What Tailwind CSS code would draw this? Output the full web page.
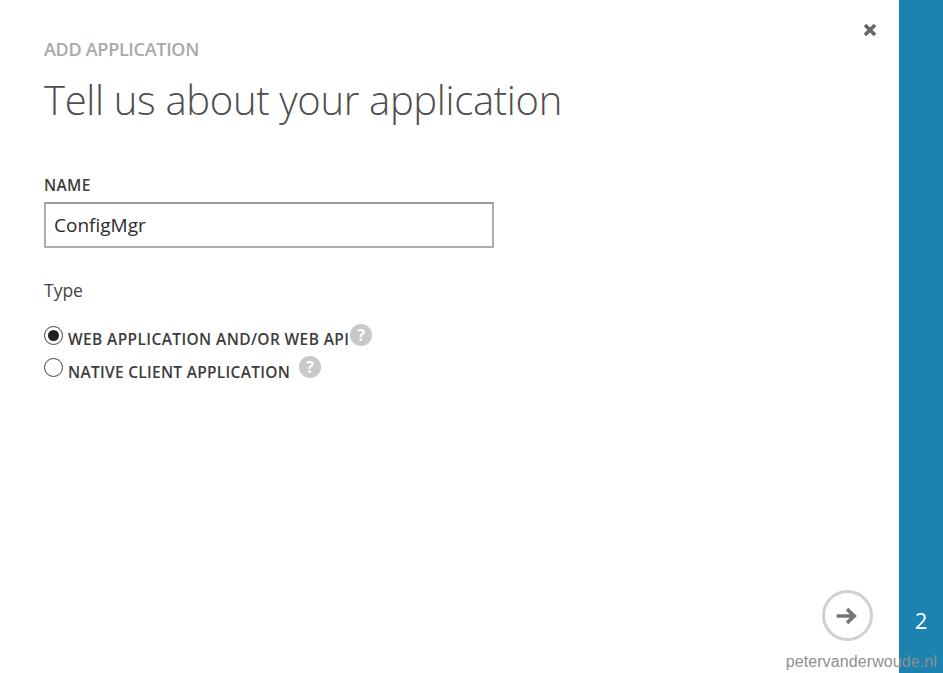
<!DOCTYPE html>
<html lang="en">
<head>
    <meta charset="UTF-8">
    <title>Add Application</title>
    <script src="https://cdn.jsdelivr.net/npm/@tailwindcss/browser@4"></script>
</head>
<body class="bg-white font-['Open_Sans',sans-serif] overflow-hidden">
    <div class="relative flex w-[943px] h-[673px] overflow-hidden">
        <!-- Dialog body -->
        <div class="relative w-[899px] h-full pl-[44px] pt-[39px]">
            <button class="absolute left-[862px] top-[22px] w-4 h-4">
                <svg viewBox="0 0 16 16" class="w-4 h-4"><path d="M3 3L13 13M13 3L3 13" stroke="#666" stroke-width="3.6" stroke-linecap="butt"/></svg>
            </button>

            <div class="text-[18px] leading-[21px] font-semibold text-[#a9a9a9] tracking-[-0.3px]">ADD APPLICATION</div>
            <h1 class="mt-[12px] text-[40px] leading-[56px] font-light text-[#4e4e4e] tracking-[-0.33px]">Tell us about your application</h1>

            <label class="block mt-[47px] text-[15.5px] leading-[20px] font-semibold text-[#3c3c3c] tracking-[0.35px]">NAME</label>
            <input value="ConfigMgr" class="block mt-[7px] w-[450px] h-[46px] border-2 border-[#adadad] border-t-[#9a9a9a] px-[8px] text-[19px] text-[#2c2c2c] bg-white outline-none">

            <div class="mt-[31px] text-[17.5px] leading-[22px] text-[#444]">Type</div>

            <div class="mt-[23px] flex flex-col gap-[9px]">
                <div class="flex items-start h-[24px]">
                    <span class="flex items-center justify-center w-[19px] h-[19px] mt-[2px] rounded-full border border-[#444] bg-white">
                        <span class="w-[11px] h-[11px] rounded-full bg-[#222]"></span>
                    </span>
                    <span class="ml-[5px] mt-[5px] text-[15.5px] leading-[20px] font-semibold text-[#3c3c3c] tracking-[0.38px]">WEB APPLICATION AND/OR WEB API</span>
                    <span class="flex items-center justify-center w-[22px] h-[22px] ml-[1px] rounded-full bg-[#c9c9c9] text-white text-[16px] font-bold leading-none">?</span>
                </div>
                <div class="flex items-start h-[24px]">
                    <span class="w-[19px] h-[19px] mt-[1px] rounded-full border border-[#444] bg-white"></span>
                    <span class="ml-[5px] mt-[5px] text-[15.5px] leading-[20px] font-semibold text-[#3c3c3c] tracking-[0.28px]">NATIVE CLIENT APPLICATION</span>
                    <span class="flex items-center justify-center w-[22px] h-[22px] ml-[9px] -mt-[1px] rounded-full bg-[#c9c9c9] text-white text-[16px] font-bold leading-none">?</span>
                </div>
            </div>

            <!-- Next button -->
            <button class="absolute left-[822px] top-[590px] flex items-center justify-center w-[51px] h-[51px] rounded-full border-[3px] border-[#d0d0d0] bg-white">
                <svg viewBox="0 0 26 22" class="w-[24px] h-[20px] -ml-[2px]"><path d="M1.5 11H21M13 3.5L21 11L13 18.5" fill="none" stroke="#777" stroke-width="4"/></svg>
            </button>
        </div>

        <!-- Step rail -->
        <div class="w-[44px] h-full bg-[#1c83b1] flex justify-center">
            <span class="mt-[605px] text-[22px] leading-[30px] font-medium text-white">2</span>
        </div>

        <div class="absolute right-[6px] top-[652px] font-['Liberation_Sans',sans-serif] text-[16px] leading-[20px] tracking-[0.1px] text-[#8f8f8f]">petervanderwoude.nl</div>
    </div>
</body>
</html>
